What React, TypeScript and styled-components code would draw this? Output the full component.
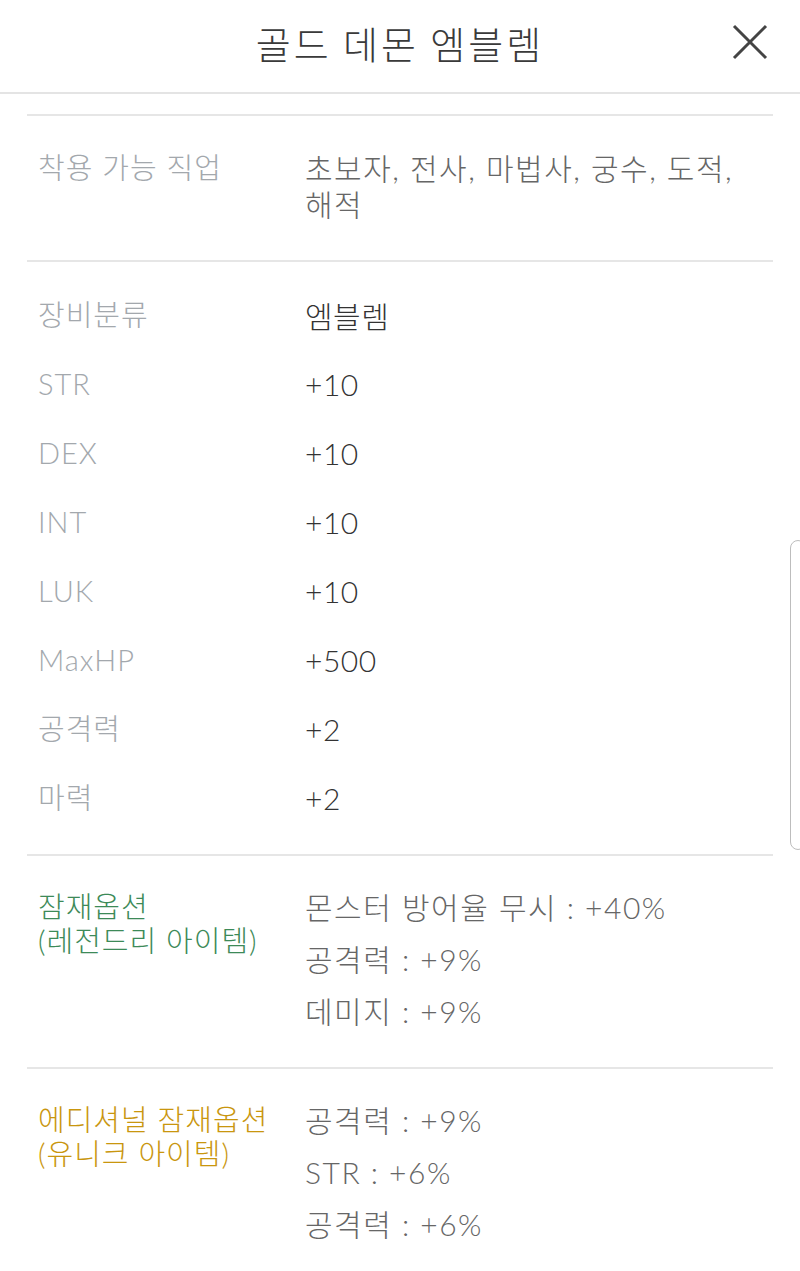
import React, { FC } from 'react';
import styled, { createGlobalStyle } from 'styled-components';

type Tone = 'plain' | 'legend' | 'unique';

type Section = {
  key: string;
  tone: Tone;
  dense?: boolean;
  rows: { label?: string; values: string[] }[];
};

const sections: Section[] = [
  {
    key: 'job',
    tone: 'plain',
    rows: [{ label: '착용 가능 직업', values: ['초보자, 전사, 마법사, 궁수, 도적, 해적'] }],
  },
  {
    key: 'stats',
    tone: 'plain',
    rows: [
      { label: '장비분류', values: ['엠블렘'] },
      { label: 'STR', values: ['+10'] },
      { label: 'DEX', values: ['+10'] },
      { label: 'INT', values: ['+10'] },
      { label: 'LUK', values: ['+10'] },
      { label: 'MaxHP', values: ['+500'] },
      { label: '공격력', values: ['+2'] },
      { label: '마력', values: ['+2'] },
    ],
  },
  {
    key: 'potential',
    tone: 'legend',
    dense: true,
    rows: [
      {
        label: '잠재옵션\n(레전드리 아이템)',
        values: ['몬스터 방어율 무시 : +40%', '공격력 : +9%', '데미지 : +9%'],
      },
    ],
  },
  {
    key: 'additional',
    tone: 'unique',
    dense: true,
    rows: [
      {
        label: '에디셔널 잠재옵션\n(유니크 아이템)',
        values: ['공격력 : +9%', 'STR : +6%', '공격력 : +6%'],
      },
    ],
  },
];

const labelColors: Record<Tone, string> = {
  plain: '#a3a8ad',
  legend: '#3d8a58',
  unique: '#c9960e',
};

export default function App() {
  return (
    <>
      <GlobalStyle />
      <Page>
        <Header>
          <Title>골드 데몬 엠블렘</Title>
          <CloseButton aria-label="닫기">
            <svg width="36" height="36" viewBox="0 0 36 36">
              <path d="M2 2 L34 34 M34 2 L2 34" stroke="#444" strokeWidth="3" fill="none" />
            </svg>
          </CloseButton>
        </Header>
        <Body>
          {sections.map((section) => (
            <SectionBlock key={section.key} $kind={section.key}>
              {section.key === 'stats'
                ? section.rows.map((row) => (
                    <StatRow key={row.label}>
                      <Label $tone="plain">{row.label}</Label>
                      <StatValue>{row.values[0]}</StatValue>
                    </StatRow>
                  ))
                : section.rows.map((row) => (
                    <InfoRow key={row.label}>
                      <Label $tone={section.tone} $dense={section.dense}>
                        {row.label}
                      </Label>
                      <ValueList $dense={section.dense}>
                        {row.values.map((v) => (
                          <li key={v}>{v}</li>
                        ))}
                      </ValueList>
                    </InfoRow>
                  ))}
            </SectionBlock>
          ))}
        </Body>
        <ScrollHandle />
      </Page>
    </>
  );
}

const GlobalStyle = createGlobalStyle`
  html, body {
    margin: 0;
    padding: 0;
    background: #ffffff;
  }
  body {
    font-family: Lato, "Noto Sans CJK KR", "Noto Sans", sans-serif;
    -webkit-font-smoothing: antialiased;
  }
`;

const Page = styled.div`
  position: relative;
  width: 800px;
  min-height: 1271px;
  background: #fff;
  overflow: hidden;
`;

const Header = styled.header`
  position: relative;
  height: 92px;
  display: flex;
  align-items: center;
  justify-content: center;
  border-bottom: 2px solid #e4e4e4;
`;

const Title = styled.h1`
  margin: 0;
  margin-top: -8px;
  font-family: "Noto Sans CJK KR", sans-serif;
  font-size: 38px;
  font-weight: 300;
  letter-spacing: 3px;
  color: #3a3a3a;
`;

const CloseButton = styled.button`
  position: absolute;
  right: 32px;
  top: 24px;
  width: 36px;
  height: 36px;
  padding: 0;
  border: 0;
  background: none;
  display: flex;
`;

const Body = styled.main`
  padding: 20px 27px 0;
`;

const SectionBlock = styled.section<{ $kind: string }>`
  border-top: 2px solid #e6e6e6;
  padding: ${({ $kind }) =>
    $kind === 'job'
      ? '34px 0 38px'
      : $kind === 'stats'
      ? '18px 0 22px'
      : '25px 0 30px'};
`;

const InfoRow = styled.div`
  display: grid;
  grid-template-columns: 267px 1fr;
  padding-left: 11px;
`;

const StatRow = styled(InfoRow)`
  height: 69px;
  align-items: center;
`;

const Label = styled.div<{ $tone: Tone; $dense?: boolean }>`
  white-space: pre-line;
  font-size: 29px;
  font-weight: 300;
  letter-spacing: 1px;
  line-height: ${({ $dense }) => ($dense ? '34px' : '36px')};
  margin-top: ${({ $dense }) => ($dense ? '9px' : '0')};
  color: ${({ $tone }) => labelColors[$tone]};
`;

const StatValue = styled.div`
  font-size: 30px;
  font-weight: 300;
  letter-spacing: 0.5px;
  color: #333;
`;

const ValueList = styled.ul<{ $dense?: boolean }>`
  margin: 0;
  padding: 0 20px 0 0;
  list-style: none;
  font-size: 30px;
  font-weight: 300;
  letter-spacing: 1.5px;
  word-break: keep-all;
  line-height: ${({ $dense }) => ($dense ? '52px' : '36px')};
  color: #666;
`;

const ScrollHandle = styled.div`
  position: absolute;
  right: -6px;
  top: 540px;
  width: 14px;
  height: 308px;
  border: 1px solid #bdbdbd;
  border-radius: 10px;
  background: #fff;
`;
